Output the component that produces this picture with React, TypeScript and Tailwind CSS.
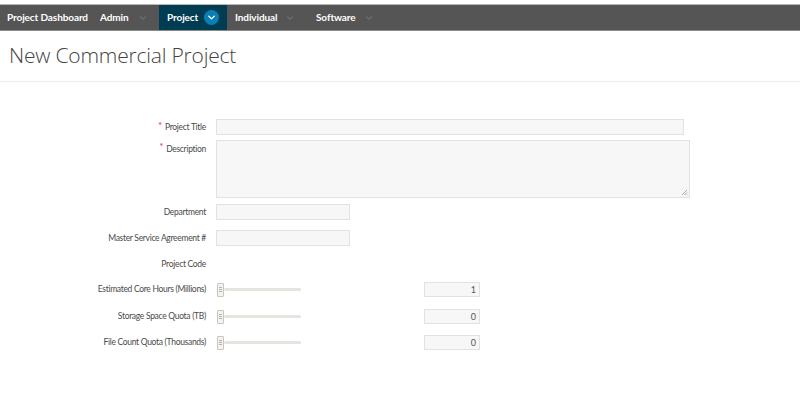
import { ChevronDown } from "lucide-react";

const font = { fontFamily: '"Open Sans", "Liberation Sans", sans-serif' };
const lato = { fontFamily: 'Lato, "Liberation Sans", sans-serif' };

// nav item with a small chevron, active one gets the blue circle
const NavItem = ({ label, active, w, pl }: { label: string; active?: boolean; w: string; pl: string }) => (
  <div
    className={`h-full flex items-center justify-between pr-[8px] ${w} ${pl} ${
      active ? "bg-[#003c52]" : ""
    }`}
  >
    <span className="text-white font-bold text-[10px] tracking-[-0.1px]" style={lato}>{label}</span>
    {active ? (
      <span className="w-[15px] h-[15px] rounded-full bg-[#0b7fb3] flex items-center justify-center">
        <ChevronDown size={11} strokeWidth={3} className="text-white" />
      </span>
    ) : (
      <ChevronDown size={10} strokeWidth={1.5} className="text-[#9a9a9a] mr-[3px]" />
    )}
  </div>
);

const Label = ({ text, required, top }: { text: string; required?: boolean; top?: boolean }) => (
  <div
    className={`w-[206px] shrink-0 flex justify-end text-[8.5px] tracking-[-0.3px] text-[#4a4a4a] ${
      top ? "items-start pt-[3px]" : "items-center"
    }`}
    style={lato}
  >
    {required && <span className="text-[#e8344d] text-[10px] mr-[3px] -mt-[4px]">*</span>}
    <span>{text}</span>
  </div>
);

const Slider = () => (
  <div className="w-[198px] flex items-center">
    <div className="relative flex items-center ml-[1px]">
      <div className="w-[7px] h-[14px] border border-[#c9c6c0] bg-[#f4f3f1] rounded-[1px] flex flex-col items-center justify-center gap-[1px] z-10">
        <div className="w-[3px] h-px bg-[#b5b2ac]" />
        <div className="w-[3px] h-px bg-[#b5b2ac]" />
        <div className="w-[3px] h-px bg-[#b5b2ac]" />
      </div>
      <div className="w-[77px] h-[3px] bg-[#e6e4df] rounded-full" />
    </div>
  </div>
);

const NumberBox = ({ value }: { value: string }) => (
  <div className="w-[56px] h-[15px] bg-[#f7f7f7] border border-[#e2e2e2] flex items-center justify-end pr-[3px] text-[9px] text-[#555]" style={lato}>
    {value}
  </div>
);

export default function App() {
  return (
    <div className="w-[800px] h-[394px] bg-white overflow-hidden" style={font}>
      <nav className="mt-[4px] h-[27px] bg-[#555555] border-t border-[#b8b8b8] border-b border-b-[#8a8a8a] flex items-stretch">
        <div className="h-full w-[93px] flex items-center pl-[7px]">
          <span className="text-white font-bold text-[10px] tracking-[-0.1px]" style={lato}>Project Dashboard</span>
        </div>
        <NavItem label="Admin" w="w-[66px]" pl="pl-[7px]" />
        <NavItem label="Project" active w="w-[68px]" pl="pl-[8px]" />
        <NavItem label="Individual" w="w-[79px]" pl="pl-[8px]" />
        <NavItem label="Software" w="w-[79px]" pl="pl-[10px]" />
      </nav>

      <div className="h-[51px] border-b border-[#ececec] flex items-center pl-[9px]">
        <h1 className="text-[21px] font-light text-[#444] tracking-[-0.2px]">New Commercial Project</h1>
      </div>

      <div className="pt-[37px] flex flex-col">
        <div className="flex h-[16px] gap-[10px]">
          <Label text="Project Title" required />
          <div className="w-[468px] h-[16px] bg-[#f7f7f7] border border-[#e2e2e2]" />
        </div>
        <div className="flex mt-[5px] gap-[10px]">
          <Label text="Description" required top />
          <div className="relative w-[474px] h-[58px] bg-[#f7f7f7] border border-[#e2e2e2]">
            <svg className="absolute right-[1px] bottom-[1px]" width="7" height="7" viewBox="0 0 7 7">
              <path d="M6 1 L1 6 M6 3.5 L3.5 6 M6 5.5 L5.5 6" stroke="#999" strokeWidth="0.8" />
            </svg>
          </div>
        </div>
        <div className="flex h-[16px] mt-[6px] gap-[10px]">
          <Label text="Department" />
          <div className="w-[134px] h-[16px] bg-[#f7f7f7] border border-[#e2e2e2]" />
        </div>
        <div className="flex h-[16px] mt-[10px] gap-[10px]">
          <Label text="Master Service Agreement #" />
          <div className="w-[134px] h-[16px] bg-[#f7f7f7] border border-[#e2e2e2]" />
        </div>
        <div className="flex h-[16px] mt-[10px] gap-[10px]">
          <Label text="Project Code" />
        </div>
        <div className="flex h-[15px] mt-[10px] gap-[10px]">
          <Label text="Estimated Core Hours (Millions)" />
          <Slider />
          <NumberBox value="1" />
        </div>
        <div className="flex h-[15px] mt-[12px] gap-[10px]">
          <Label text="Storage Space Quota (TB)" />
          <Slider />
          <NumberBox value="0" />
        </div>
        <div className="flex h-[15px] mt-[11px] gap-[10px]">
          <Label text="File Count Quota (Thousands)" />
          <Slider />
          <NumberBox value="0" />
        </div>
      </div>
    </div>
  );
}
